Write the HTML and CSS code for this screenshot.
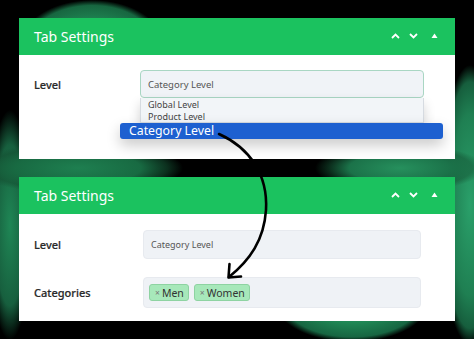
FILE: index.html
```html
<!DOCTYPE html>
<html lang="en">
<head>
<meta charset="utf-8">
<title>Tab Settings</title>
<link rel="stylesheet" href="styles.css">
</head>
<body>
<div class="page">
  <section class="panel panel-first">
    <header class="panel-head">
      <h2 class="panel-title">Tab Settings</h2>
      <div class="tools">
        <svg class="tool" width="9" height="6" viewBox="0 0 9 6"><path d="M1 5 L4.5 1.5 L8 5" fill="none" stroke="#fff" stroke-width="1.8"/></svg>
        <svg class="tool" width="9" height="6" viewBox="0 0 9 6"><path d="M1 1 L4.5 4.5 L8 1" fill="none" stroke="#fff" stroke-width="1.8"/></svg>
        <svg class="tool tool-tri" width="7" height="6" viewBox="0 0 7 6"><path d="M3.5 0.5 L6.5 5 L0.5 5 Z" fill="#fff"/></svg>
      </div>
    </header>
    <div class="panel-body body-first">
      <div class="row row-first">
        <span class="label">Level</span>
        <div class="select-wrap">
          <div class="select select-open">Category Level</div>
          <ul class="options">
            <li>Global Level</li>
            <li>Product Level</li>
          </ul>
          <div class="picked">Category Level</div>
        </div>
      </div>
    </div>
  </section>

  <section class="panel panel-second">
    <header class="panel-head">
      <h2 class="panel-title">Tab Settings</h2>
      <div class="tools">
        <svg class="tool" width="9" height="6" viewBox="0 0 9 6"><path d="M1 5 L4.5 1.5 L8 5" fill="none" stroke="#fff" stroke-width="1.8"/></svg>
        <svg class="tool" width="9" height="6" viewBox="0 0 9 6"><path d="M1 1 L4.5 4.5 L8 1" fill="none" stroke="#fff" stroke-width="1.8"/></svg>
        <svg class="tool tool-tri" width="7" height="6" viewBox="0 0 7 6"><path d="M3.5 0.5 L6.5 5 L0.5 5 Z" fill="#fff"/></svg>
      </div>
    </header>
    <div class="panel-body body-second">
      <div class="row row-second">
        <span class="label">Level</span>
        <div class="field field-level">Category Level</div>
      </div>
      <div class="row row-second">
        <span class="label">Categories</span>
        <div class="field field-tags">
          <span class="tag"><span class="tag-x">×</span>Men</span>
          <span class="tag"><span class="tag-x">×</span>Women</span>
        </div>
      </div>
    </div>
  </section>

  <svg class="arrow" width="474" height="339" viewBox="0 0 474 339">
    <path d="M219 134 C 250 148 268 175 266 210 C 264 240 250 260 229 277" fill="none" stroke="#000" stroke-width="2.6" stroke-linecap="round"/>
    <path d="M229.5 264 L228.5 277.5 L241 276.5" fill="none" stroke="#000" stroke-width="2.6" stroke-linecap="round" stroke-linejoin="round"/>
  </svg>
</div>
</body>
</html>
```
FILE: styles.css
```css
* { box-sizing: border-box; }

html, body {
  margin: 0;
  padding: 0;
}

body {
  width: 474px;
  height: 339px;
  overflow: hidden;
  font-family: "Noto Sans", "Open Sans", sans-serif;
  background-color: #000;
  background-image:
    radial-gradient(ellipse 72px 46px at 92px 46px, #2b9a63 0%, #1f8352 55%, #176640 88%, rgba(0,0,0,0) 100%),
    radial-gradient(ellipse 105px 26px at 78px 168px, #1e7f50 0%, #186a42 60%, rgba(20,80,50,0.6) 85%, rgba(0,0,0,0) 100%),
    radial-gradient(ellipse 22px 115px at 10px 225px, #1f8655 0%, #175f3e 70%, rgba(0,0,0,0) 100%),
    radial-gradient(ellipse 85px 24px at 400px 168px, #26905d 0%, #1b7249 60%, rgba(20,80,50,0.5) 85%, rgba(0,0,0,0) 100%),
    radial-gradient(ellipse 30px 140px at 470px 205px, #2aa06a 0%, #1f7f52 65%, #165e3d 88%, rgba(0,0,0,0) 100%),
    radial-gradient(ellipse 78px 42px at 352px 300px, #2cae6e 0%, #1f8654 55%, #176642 88%, rgba(0,0,0,0) 100%);
}

.page {
  position: relative;
  width: 474px;
  height: 339px;
  padding: 18px 19px 0 19px;
  display: flex;
  flex-direction: column;
  gap: 18px;
}

.panel {
  width: 436px;
  background: #fff;
  display: flex;
  flex-direction: column;
}

.panel-head {
  height: 37px;
  flex: 0 0 37px;
  background: #1bc25f;
  display: flex;
  align-items: center;
  justify-content: space-between;
  padding: 0 17px 0 15px;
}

.panel-title {
  margin: 0;
  font-size: 14px;
  font-weight: 400;
  color: #fff;
  line-height: 1;
}

.tools {
  display: flex;
  align-items: center;
  gap: 9px;
  margin-top: -1px;
}

.tool { display: block; }
.tool-tri { margin-left: 4px; }

.panel-body {
  padding: 0 15px;
}

.body-first {
  height: 104px;
  padding-top: 15px;
}

.body-second {
  height: 107px;
  padding-top: 16px;
  display: flex;
  flex-direction: column;
  gap: 18px;
}

.row {
  display: grid;
  align-items: center;
}

.row-first { grid-template-columns: 106px 284px; }
.row-second { grid-template-columns: 109px 278px; }

.label {
  font-size: 11px;
  font-weight: 500;
  color: #2a2a2a;
  -webkit-text-stroke: 0.2px #2a2a2a;
}

.select-wrap {
  position: relative;
}

.select {
  height: 28px;
  display: flex;
  align-items: center;
  padding-left: 7px;
  font-size: 9.5px;
  color: #555;
  background: #f0f3f7;
  border: 1px solid #a9d6c3;
  border-radius: 4px;
}

.options {
  position: absolute;
  left: 0;
  right: 0;
  top: 28px;
  margin: 0;
  padding: 1px 0 0 7px;
  list-style: none;
  height: 25px;
  background: #f2f5f8;
  border: 1px solid #d6dbe1;
  border-top: none;
  box-shadow: 0 6px 12px rgba(0,0,0,0.18);
  font-size: 9px;
  color: #444;
  line-height: 12px;
  overflow: hidden;
}

.picked {
  position: absolute;
  left: -20px;
  right: -19px;
  top: 53px;
  height: 16px;
  background: #1d60d0;
  border-radius: 3px;
  color: #fff;
  font-size: 12.3px;
  line-height: 16px;
  padding-left: 9px;
  box-shadow: 0 6px 14px rgba(0,0,0,0.22);
}

.field {
  background: #eff2f6;
  border: 1px solid #e7eaef;
  border-radius: 4px;
  display: flex;
  align-items: center;
}

.field-level {
  height: 29px;
  padding-left: 7px;
  font-size: 9px;
  color: #555;
}

.field-tags {
  height: 31px;
  padding-left: 5px;
  gap: 5px;
}

.tag {
  height: 17px;
  display: inline-flex;
  align-items: center;
  padding: 0 4px 0 5px;
  background: #a7e8ba;
  border: 1px solid #8ed3a2;
  border-radius: 3px;
  font-size: 10.5px;
  color: #333;
}

.tag-x {
  font-size: 8.5px;
  color: #777;
  margin-right: 2px;
}

.arrow {
  position: absolute;
  left: 0;
  top: 0;
  pointer-events: none;
}
```
